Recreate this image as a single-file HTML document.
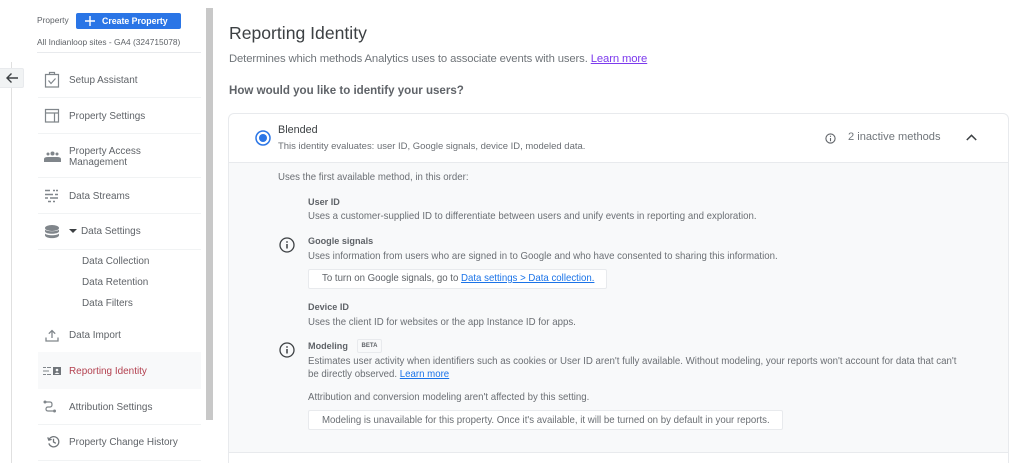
<!DOCTYPE html>
<html lang="en"><head><meta charset="utf-8"><title>Reporting Identity</title>
<style>
html,body{margin:0;padding:0;background:#fff}
#p{position:relative;width:1024px;height:463px;overflow:hidden;background:#fff;font-family:"Liberation Sans",sans-serif;color:#5f6368;filter:blur(.3px)}
.t{position:absolute;white-space:nowrap;line-height:14px;font-size:10px}
.b{position:absolute}
.n{font-size:9.95px;color:#5f6368;left:69px}
.sub{font-size:9.95px;color:#5f6368;left:82px}
.d{font-size:9.66px;color:#6b6f74;left:308px}
.h{font-size:9.1px;color:#5f6368;left:308px;font-weight:bold}
.sep{position:absolute;left:38px;width:163px;height:1px;background:#f1f3f4}
a{color:#1a73e8}
svg{position:absolute;overflow:visible}
</style></head><body><div id="p">
<div class="b" style="left:11px;top:62px;width:1px;height:401px;background:#e0e0e0"></div>
<div class="b" style="left:0;top:68px;width:24px;height:20px;background:#f1f3f4;border:1px solid #e8eaed;border-left:0;box-sizing:border-box;border-radius:0 2px 2px 0"></div>
<svg style="left:5px;top:72px" width="14" height="14" viewBox="0 0 14 14"><path d="M13 6H2M6.500 1.500L2 6l4.500 4.500" fill="none" stroke="#3c4043" stroke-width="1.400"/></svg>
<div class="b" style="left:205.500px;top:8px;width:7px;height:412px;background:#c8c8c8"></div>

<div class="t" style="left:37px;top:13px;font-size:8.400px;color:#5f6368">Property</div>
<div class="b" style="left:76px;top:13px;width:105px;height:16px;background:#2a75e6;border-radius:2px"></div>
<svg style="left:84px;top:15px" width="12" height="12" viewBox="0 0 12 12"><path d="M6 1v10M1 6h10" stroke="#fff" stroke-width="1.400"/></svg>
<div class="t" style="left:102px;top:14px;font-size:8.750px;color:#fff;font-weight:bold">Create Property</div>
<div class="t" style="left:37px;top:35px;font-size:8.350px;color:#5f6368">All Indianloop sites - GA4 (324715078)</div>
<div class="b" style="left:37px;top:52px;width:164px;height:1px;background:#e8eaed"></div>

<svg style="left:44px;top:71px" width="16" height="17" viewBox="0 0 16 17"><path d="M1.500 3.500h13v12.500h-13zM5.500 3.500V1.500h5v2M4.500 9.500l2.500 3 4.500-5" fill="none" stroke="#80868b" stroke-width="1.200"/></svg>
<div class="t n" style="top:74px">Setup Assistant</div>
<div class="sep" style="top:97px"></div>
<svg style="left:44px;top:108px" width="16" height="15" viewBox="0 0 16 15"><path d="M1.500 1.500h13v12.500h-13zM1.500 5h13M10.500 5v9" fill="none" stroke="#80868b" stroke-width="1.200"/></svg>
<div class="t n" style="top:110px">Property Settings</div>
<div class="sep" style="top:133px"></div>
<svg style="left:44px;top:151px" width="17" height="12" viewBox="0 0 17 12"><circle cx="4" cy="3" r="1.500" fill="#80868b"/><circle cx="8.500" cy="2.500" r="2" fill="#80868b"/><circle cx="13" cy="3" r="1.500" fill="#80868b"/><path d="M0 11V8q0-2 4-2h9q4 0 4 2v3z" fill="#80868b"/></svg>
<div class="t n" style="top:145px">Property Access</div>
<div class="t n" style="top:156px">Management</div>
<div class="sep" style="top:177px"></div>
<svg style="left:45px;top:189px" width="14" height="14" viewBox="0 0 14 14"><path d="M0 1.500h5M8 1.500h2M11 1.500h2M0 5.500h8M10 5.500h3M0 9h3M5 9h8M3 12.500h3M8 12.500h2" stroke="#80868b" stroke-width="1.400"/></svg>
<div class="t n" style="top:190px">Data Streams</div>
<div class="sep" style="top:213px"></div>
<svg style="left:45px;top:225px" width="14" height="14" viewBox="0 0 14 14"><ellipse cx="7" cy="3" rx="7" ry="3" fill="#80868b"/><path d="M0 4.500C1 6.800 13 6.800 14 4.500V6.500C13 9.500 1 9.500 0 6.500zM0 8.500c1 2.300 13 2.300 14 0v2C13 14 1 14 0 10.500z" fill="#80868b"/></svg>
<svg style="left:69px;top:229px" width="8" height="5" viewBox="0 0 8 5"><path d="M0 0h8L4 4z" fill="#3c4043"/></svg>
<div class="t n" style="top:225px;left:81px">Data Settings</div>
<div class="sep" style="top:249px"></div>
<div class="t sub" style="top:255px">Data Collection</div>
<div class="t sub" style="top:276px">Data Retention</div>
<div class="t sub" style="top:297px">Data Filters</div>
<svg style="left:45px;top:329px" width="14" height="13" viewBox="0 0 14 13"><path d="M7 9V1.500M3.800 4.700L7 1.500l3.200 3.200M1 8.500V12h12V8.500" fill="none" stroke="#80868b" stroke-width="1.300"/></svg>
<div class="t n" style="top:329px">Data Import</div>
<div class="b" style="left:38px;top:352px;width:163px;height:37px;background:#f8f9fa"></div>
<svg style="left:43px;top:366px" width="18" height="10" viewBox="0 0 18 10"><path d="M0 1.500h3M4 1.500h4M0 5h6M0 8.500h3M4 8.500h4" stroke="#80868b" stroke-width="1.100"/><path d="M10 1h8v8h-8z" fill="#70757a"/><circle cx="14" cy="4" r="1.300" fill="#f8f9fa"/><path d="M11.500 8q2.500-3 5 0z" fill="#f8f9fa"/></svg>
<div class="t n" style="top:365px;color:#b3404f">Reporting Identity</div>
<svg style="left:43px;top:400px" width="14" height="13" viewBox="0 0 14 13"><circle cx="2" cy="2" r="1.500" fill="#80868b"/><circle cx="11.500" cy="11" r="1.500" fill="#80868b"/><path d="M3 2h4q2 0 2 2.500T7 7H5q-2 0-2 2t2 2h5" fill="none" stroke="#80868b" stroke-width="1.200"/></svg>
<div class="t n" style="top:401px">Attribution Settings</div>
<div class="sep" style="top:424px"></div>
<svg style="left:47px;top:435px" width="13" height="13" viewBox="0 0 14 14"><path d="M2.200 5A5.500 5.500 0 1 1 2 9M.8 2.500 2 5.500l3-.8M7 4v3.500l2.500 1.500" fill="none" stroke="#70757a" stroke-width="1.400"/></svg>
<div class="t n" style="top:436px">Property Change History</div>
<div class="sep" style="top:460px"></div>

<div class="t" style="left:229px;top:21px;font-size:17.600px;line-height:24px;color:#3c4043">Reporting Identity</div>
<div class="t" style="left:229px;top:52px;font-size:11.300px;letter-spacing:-.13px;color:#70757a">Determines which methods Analytics uses to associate events with users. <a href="#" style="color:#7c3aed">Learn more</a></div>
<div class="t" style="left:229px;top:84px;font-size:11.550px;color:#5f6368;font-weight:bold">How would you like to identify your users?</div>

<div class="b" style="left:228px;top:113px;width:781px;height:360px;border:1px solid #e8eaed;border-radius:6px;box-sizing:border-box;background:#fff"></div>
<div class="b" style="left:229px;top:162px;width:779px;height:291px;background:#f8f9fa;border-top:1px solid #e8eaed;border-bottom:1px solid #e8eaed;box-sizing:border-box"></div>

<svg style="left:255px;top:130px" width="16" height="16" viewBox="0 0 16 16"><circle cx="8" cy="8" r="7" fill="none" stroke="#2a75e6" stroke-width="1.500"/><circle cx="8" cy="8" r="4" fill="#2a75e6"/></svg>
<div class="t" style="left:278px;top:123px;font-size:10.800px;color:#3c4043">Blended</div>
<div class="t d" style="left:278px;top:140px;font-size:9.470px">This identity evaluates: user ID, Google signals, device ID, modeled data.</div>
<svg style="left:825px;top:133px" width="11" height="11" viewBox="0 0 11 11"><circle cx="5.500" cy="5.500" r="4.600" fill="none" stroke="#5f6368" stroke-width="1.100"/><path d="M5.500 5v3.200M5.500 2.700v1.200" stroke="#5f6368" stroke-width="1.100"/></svg>
<div class="t" style="left:848px;top:130px;font-size:11.100px;color:#70757a">2 inactive methods</div>
<svg style="left:966px;top:134px" width="11" height="7" viewBox="0 0 11 7"><path d="M.8 6l4.700-4.700L10.200 6" fill="none" stroke="#3c4043" stroke-width="1.500"/></svg>

<div class="t d" style="left:278px;top:171px">Uses the first available method, in this order:</div>
<div class="t h" style="top:195px">User ID</div>
<div class="t d" style="top:210px">Uses a customer-supplied ID to differentiate between users and unify events in reporting and exploration.</div>
<svg style="left:279px;top:237px" width="16" height="16" viewBox="0 0 16 16"><circle cx="8" cy="8" r="7" fill="none" stroke="#3c4043" stroke-width="1.300"/><path d="M8 7v4.500M8 4.200v1.500" stroke="#3c4043" stroke-width="1.500"/></svg>
<div class="t h" style="top:234px">Google signals</div>
<div class="t d" style="top:250px">Uses information from users who are signed in to Google and who have consented to sharing this information.</div>
<div class="b" style="left:308px;top:269px;width:299px;height:20px;background:#fff;border:1px solid #e8eaed;border-radius:2px;box-sizing:border-box"></div>
<div class="t d" style="left:322px;top:272px;color:#5f6368">To turn on Google signals, go to <a href="#">Data settings &gt; Data collection.</a></div>
<div class="t h" style="top:300px">Device ID</div>
<div class="t d" style="top:316px">Uses the client ID for websites or the app Instance ID for apps.</div>
<svg style="left:279px;top:342px" width="16" height="16" viewBox="0 0 16 16"><circle cx="8" cy="8" r="7" fill="none" stroke="#3c4043" stroke-width="1.300"/><path d="M8 7v4.500M8 4.200v1.500" stroke="#3c4043" stroke-width="1.500"/></svg>
<div class="t h" style="top:339px">Modeling</div>
<div class="b" style="left:357px;top:339px;width:25px;height:14px;border:1px solid #e8eaed;border-radius:2px;box-sizing:border-box"></div>
<div class="t" style="left:357px;width:25px;text-align:center;top:339px;font-size:6px;font-weight:bold;color:#5f6368">BETA</div>
<div class="t d" style="top:355px;font-size:9.700px">Estimates user activity when identifiers such as cookies or User ID aren't fully available. Without modeling, your reports won't account for data that can't</div>
<div class="t d" style="top:368px">be directly observed. <a href="#">Learn more</a></div>
<div class="t d" style="top:391px">Attribution and conversion modeling aren't affected by this setting.</div>
<div class="b" style="left:308px;top:410px;width:475px;height:20px;background:#fff;border:1px solid #e8eaed;border-radius:2px;box-sizing:border-box"></div>
<div class="t d" style="left:322px;top:414px">Modeling is unavailable for this property. Once it's available, it will be turned on by default in your reports.</div>
</div></body></html>
